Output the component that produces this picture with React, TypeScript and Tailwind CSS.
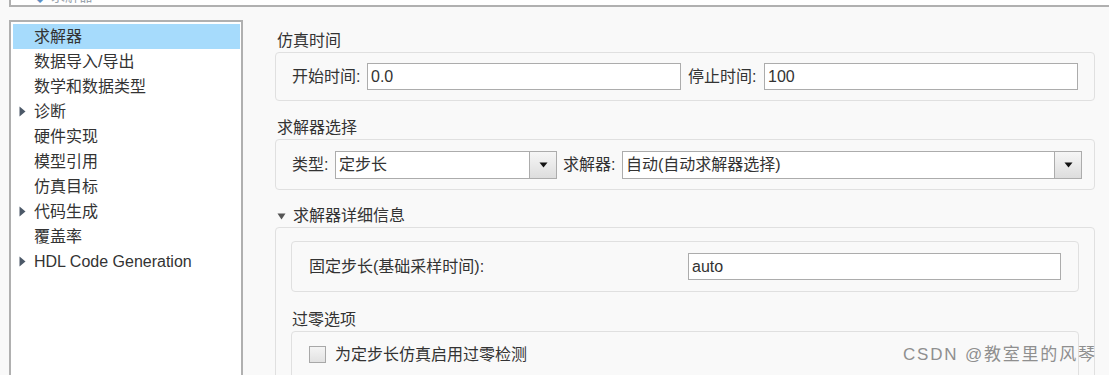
import type { ReactNode } from 'react';

const FONT = "font-['Liberation_Sans','Noto_Sans_CJK_SC',sans-serif]";

type Node = { label: string; expandable?: boolean; selected?: boolean };

const tree: Node[] = [
  { label: '求解器', selected: true },
  { label: '数据导入/导出' },
  { label: '数学和数据类型' },
  { label: '诊断', expandable: true },
  { label: '硬件实现' },
  { label: '模型引用' },
  { label: '仿真目标' },
  { label: '代码生成', expandable: true },
  { label: '覆盖率' },
  { label: 'HDL Code Generation', expandable: true },
];

function RightArrow() {
  return (
    <svg width="7" height="11" viewBox="0 0 7 11" className="shrink-0">
      <path d="M0.5 0.5 L6.5 5.5 L0.5 10.5 Z" fill="#4c5968" />
    </svg>
  );
}

function DownArrow() {
  return (
    <svg width="9" height="7" viewBox="0 0 9 7" className="shrink-0">
      <path d="M0.5 0.5 L8.5 0.5 L4.5 6.5 Z" fill="#555" />
    </svg>
  );
}

function TextBox({ value, width }: { value: string; width: string }) {
  return (
    <div className={`${width} h-[27px] border border-[#acacac] bg-white pl-[3px] leading-[25px] text-[#333]`}>
      {value}
    </div>
  );
}

function Select({ value, width }: { value: string; width: string }) {
  return (
    <div className={`${width} flex h-[28px] border border-[#acacac] bg-white`}>
      <div className="flex-1 pl-[3px] leading-[26px] text-[#333]">{value}</div>
      <div className="flex w-[27px] items-center justify-center border-l border-[#acacac] bg-gradient-to-b from-[#f6f6f6] to-[#dddddd]">
        <svg width="9" height="6" viewBox="0 0 9 6">
          <path d="M0.5 0.5 L8.5 0.5 L4.5 5.5 Z" fill="#111" />
        </svg>
      </div>
    </div>
  );
}

function Group({ className, children }: { className: string; children: ReactNode }) {
  return <div className={`rounded-[4px] border border-[#e0e0e0] ${className}`}>{children}</div>;
}

function Heading({ children }: { children: ReactNode }) {
  return <div className="flex h-[22px] items-center gap-[7px] pl-[2px] text-[#333]">{children}</div>;
}

export default function App() {
  return (
    <div className={`${FONT} relative h-[375px] w-[1109px] overflow-hidden bg-[#f9f9f9] text-[16px]`}>
      {/* cut-off panel above */}
      <div className="ml-[9px] h-[7px] overflow-hidden border-b-2 border-l-2 border-[#b0b0b0] bg-white">
        <div className="-mt-[14px] flex items-center gap-[4px] pl-[22px] text-[14px] text-[#9aa4ad]">
          <span className="text-[#5d8fc4]">◆</span>
          <span>求解器</span>
        </div>
      </div>

      <div className="mt-[13px] flex">
        {/* tree */}
        <div className="ml-[9px] h-[380px] w-[234px] border-2 border-[#b0b0b0] bg-white pt-[2px] pl-[2px] pr-[1px]">
          {tree.map((n) => (
            <div
              key={n.label}
              className={`flex h-[25px] items-center leading-[25px] text-[#333] ${n.selected ? 'bg-[#a6dbfc]' : ''}`}
            >
              <div className="flex w-[21px] justify-start pl-[6px]">{n.expandable && <RightArrow />}</div>
              <span>{n.label}</span>
            </div>
          ))}
        </div>

        {/* settings */}
        <div className="ml-[32px] w-[820px] pt-[10px]">
          <Heading>仿真时间</Heading>
          <Group className="flex h-[49px] items-center pl-[16px]">
            <span className="w-[75px] text-[#333]">开始时间:</span>
            <TextBox value="0.0" width="w-[314px]" />
            <span className="ml-[7px] w-[76px] text-[#333]">停止时间:</span>
            <TextBox value="100" width="w-[314px]" />
          </Group>

          <div className="mt-[16px]">
            <Heading>求解器选择</Heading>
          </div>
          <Group className="flex h-[51px] items-center pl-[16px]">
            <span className="w-[43px] text-[#333]">类型:</span>
            <Select value="定步长" width="w-[222px]" />
            <span className="ml-[6px] w-[59px] text-[#333]">求解器:</span>
            <Select value="自动(自动求解器选择)" width="w-[460px]" />
          </Group>

          <div className="mt-[15px]">
            <Heading>
              <DownArrow />
              <span>求解器详细信息</span>
            </Heading>
          </div>
          <Group className="h-[200px] pt-[13px] pl-[15px] pr-[15px]">
            <Group className="flex h-[51px] items-center pl-[17px]">
              <span className="w-[379px] text-[#333]">固定步长(基础采样时间):</span>
              <TextBox value="auto" width="w-[373px]" />
            </Group>
            <div className="mt-[17px] flex h-[22px] items-center pl-[1px] text-[#333]">过零选项</div>
            <Group className="h-[80px] pt-[14px] pl-[17px]">
              <div className="flex items-center gap-[9px]">
                <div className="h-[17px] w-[17px] border border-[#a8a8a8] bg-gradient-to-b from-[#f4f4f4] to-[#e2e2e2]" />
                <span className="leading-[17px] text-[#333]">为定步长仿真启用过零检测</span>
              </div>
            </Group>
          </Group>
        </div>
      </div>

      {/* watermark */}
      <div className="absolute left-[903px] top-[343px] text-[17px] leading-[24px] tracking-[1.8px] text-[#8f8f8f]">
        CSDN @教室里的风琴
      </div>
    </div>
  );
}
